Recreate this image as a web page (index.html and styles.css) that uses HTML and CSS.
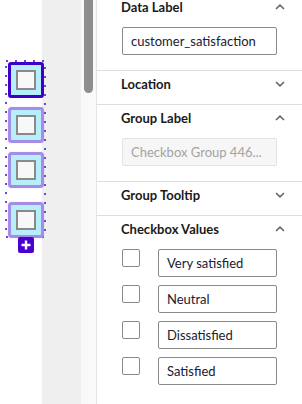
FILE: index.html
```html
<!DOCTYPE html>
<html>
<head>
<meta charset="utf-8">
<link rel="stylesheet" href="styles.css">
</head>
<body>
<div class="app">
  <div class="stage">
    <div class="canvas"></div>
    <div class="gutter"></div>
    <div class="group">
      <svg class="group-outline" width="41" height="178" viewBox="0 0 41 178">
        <rect x="1" y="1" width="39" height="176" fill="none" stroke="#6f45dc" stroke-width="2" stroke-dasharray="2 7"/>
      </svg>
      <div class="item selected"><span class="box"></span></div>
      <div class="item"><span class="box"></span></div>
      <div class="item"><span class="box"></span></div>
      <div class="item last"><span class="box"></span></div>
      <div class="add-btn">
        <svg width="10" height="10" viewBox="0 0 10 10"><path d="M5 0.5V9.5M0.5 5H9.5" stroke="#fff" stroke-width="2.4"/></svg>
      </div>
    </div>
  </div>
  <div class="track"><div class="thumb"></div></div>
  <div class="panel">
    <section class="section first">
      <div class="head"><span class="title">Data Label</span>
        <svg class="chev" width="10" height="6" viewBox="0 0 10 6"><path d="M1 5L5 1.2L9 5" fill="none" stroke="#666" stroke-width="1.6"/></svg>
      </div>
      <div class="body"><div class="field">customer_satisfaction</div></div>
    </section>
    <section class="section">
      <div class="head"><span class="title">Location</span>
        <svg class="chev" width="10" height="6" viewBox="0 0 10 6"><path d="M1 1L5 4.8L9 1" fill="none" stroke="#666" stroke-width="1.6"/></svg>
      </div>
    </section>
    <section class="section">
      <div class="head"><span class="title">Group Label</span>
        <svg class="chev" width="10" height="6" viewBox="0 0 10 6"><path d="M1 5L5 1.2L9 5" fill="none" stroke="#666" stroke-width="1.6"/></svg>
      </div>
      <div class="body"><div class="field disabled">Checkbox Group 446...</div></div>
    </section>
    <section class="section">
      <div class="head"><span class="title">Group Tooltip</span>
        <svg class="chev" width="10" height="6" viewBox="0 0 10 6"><path d="M1 1L5 4.8L9 1" fill="none" stroke="#666" stroke-width="1.6"/></svg>
      </div>
    </section>
    <section class="section open-end">
      <div class="head"><span class="title">Checkbox Values</span>
        <svg class="chev" width="10" height="6" viewBox="0 0 10 6"><path d="M1 5L5 1.2L9 5" fill="none" stroke="#666" stroke-width="1.6"/></svg>
      </div>
      <div class="body values">
        <div class="row"><span class="check"></span><div class="field">Very satisfied</div></div>
        <div class="row"><span class="check"></span><div class="field">Neutral</div></div>
        <div class="row"><span class="check"></span><div class="field">Dissatisfied</div></div>
        <div class="row"><span class="check"></span><div class="field">Satisfied</div></div>
      </div>
    </section>
  </div>
</div>
</body>
</html>
```
FILE: styles.css
```css
html, body {
  margin: 0;
  padding: 0;
  background: #fff;
}
body {
  font-family: Lato, "Liberation Sans", sans-serif;
}
.app {
  display: flex;
  width: 302px;
  height: 404px;
  overflow: hidden;
}
.stage {
  position: relative;
  width: 81px;
  display: flex;
  flex-shrink: 0;
}
.canvas {
  width: 42px;
  background: #fff;
}
.gutter {
  flex: 1;
  background: #efefef;
}
.group {
  position: absolute;
  left: 5px;
  top: 60px;
  width: 41px;
  height: 178px;
  display: flex;
  flex-direction: column;
  align-items: center;
  gap: 9px;
  padding-top: 2px;
  box-sizing: border-box;
}
.group-outline {
  position: absolute;
  left: 0;
  top: 0;
}
.item {
  width: 36px;
  height: 36px;
  box-sizing: border-box;
  border: 3px solid #a58ce9;
  border-radius: 4px;
  background: #b6effb;
  display: flex;
  align-items: center;
  justify-content: center;
  position: relative;
  box-shadow: 0 0 1px #b9a6ee;
}
.item.selected {
  border-color: #3c00c9;
  border-radius: 3px;
  box-shadow: none;
}
.item.last {
  margin-top: 5px;
}
.box {
  width: 20px;
  height: 20px;
  box-sizing: border-box;
  border: 2px solid #8a8a8a;
  background: #f8f8f8;
}
.add-btn {
  position: absolute;
  left: 13px;
  top: 177px;
  width: 16px;
  height: 16px;
  background: #4a00d1;
  border-radius: 2px;
  display: flex;
  align-items: center;
  justify-content: center;
}
.add-btn svg {
  display: block;
}
.track {
  width: 15px;
  flex-shrink: 0;
  background: #f9f9f9;
  border-right: 1px solid #e4e4e4;
}
.thumb {
  margin-left: 3px;
  width: 9px;
  height: 93px;
  background: #8e8e8e;
  border-radius: 0 0 5px 5px;
}
.panel {
  flex: 1;
  overflow: hidden;
  min-width: 0;
}
.section {
  border-bottom: 1px solid #dedede;
  padding-bottom: 7px;
}
.section.first {
  margin-top: -6px;
}
.section.open-end {
  border-bottom: none;
}
.head {
  height: 26px;
  display: flex;
  align-items: center;
  justify-content: space-between;
  padding: 0 17px 0 24px;
}
.title {
  font-size: 13px;
  font-weight: 700;
  color: #1a1a1a;
}
.chev {
  display: block;
}
.body {
  padding: 7px 25px 8px 25px;
}
.field {
  height: 28px;
  box-sizing: border-box;
  border: 1px solid #8a8a8a;
  border-radius: 2px;
  padding: 0 8px;
  display: flex;
  align-items: center;
  font-size: 13px;
  color: #20202e;
  white-space: nowrap;
  overflow: hidden;
}
.field.disabled {
  background: #f6f6f6;
  border-color: #e2e2e2;
  color: #a3a3a3;
}
.values {
  display: flex;
  flex-direction: column;
  gap: 8px;
}
.row {
  display: flex;
  align-items: flex-start;
  gap: 18px;
}
.check {
  width: 18px;
  height: 18px;
  box-sizing: border-box;
  border: 1px solid #8a8a8a;
  border-radius: 2px;
  flex-shrink: 0;
}
.row .field {
  flex: 1;
}
```
